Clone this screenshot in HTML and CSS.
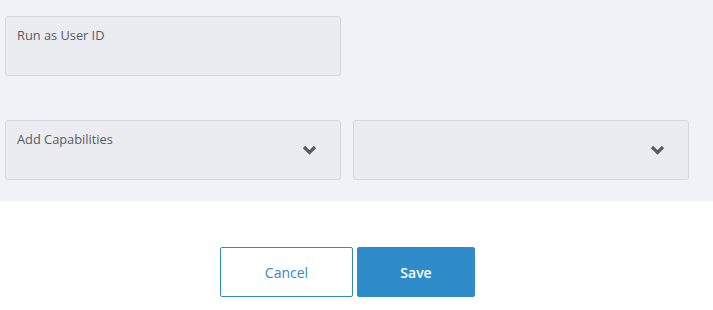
FILE: index.html
```html
<!DOCTYPE html>
<html>
<head>
<meta charset="utf-8">
<link rel="stylesheet" href="styles.css">
</head>
<body>
<div class="panel">
  <div class="row">
    <div class="field"><span class="label">Run as User ID</span></div>
  </div>
  <div class="row row-two">
    <div class="field select">
      <span class="label">Add Capabilities</span>
      <svg class="chev" width="15" height="10" viewBox="0 0 15 10"><path d="M2 2 L7.5 7.5 L13 2" fill="none" stroke="#5b5b60" stroke-width="3.2"/></svg>
    </div>
    <div class="field select">
      <span class="label"></span>
      <svg class="chev" width="15" height="10" viewBox="0 0 15 10"><path d="M2 2 L7.5 7.5 L13 2" fill="none" stroke="#5b5b60" stroke-width="3.2"/></svg>
    </div>
  </div>
</div>
<div class="actions">
  <button class="btn btn-cancel">Cancel</button>
  <button class="btn btn-save">Save</button>
</div>
</body>
</html>
```
FILE: styles.css
```css
html, body {
  margin: 0;
  padding: 0;
  background: #ffffff;
  font-family: "Open Sans", "Noto Sans", sans-serif;
}
.panel {
  background: #f1f2f7;
  height: 201px;
  padding: 16px 24px 0 5px;
  box-sizing: border-box;
}
.row {
  display: flex;
  gap: 12px;
}
.row-two {
  margin-top: 44px;
}
.field {
  width: 336px;
  height: 60px;
  box-sizing: border-box;
  background: #ebecf1;
  border: 1px solid #d7d8de;
  border-radius: 3px;
  padding: 9px 11px;
  position: relative;
}
.label {
  display: block;
  font-size: 12.8px;
  color: #595a5f;
  line-height: 18px;
  font-weight: 500;
}
.chev {
  position: absolute;
  right: 23px;
  top: 24px;
}
.actions {
  display: flex;
  gap: 4px;
  padding: 46px 0 0 220px;
}
.btn {
  height: 50px;
  font-family: inherit;
  font-size: 14px;
  border-radius: 2px;
  box-sizing: border-box;
  cursor: pointer;
}
.btn-cancel {
  width: 133px;
  background: #fff;
  border: 1px solid #2f8ac9;
  color: #2f8ac9;
  font-weight: 500;
}
.btn-save {
  width: 118px;
  background: #2f8bca;
  border: 1px solid #2f8bca;
  color: #fff;
  font-weight: 600;
}
```
